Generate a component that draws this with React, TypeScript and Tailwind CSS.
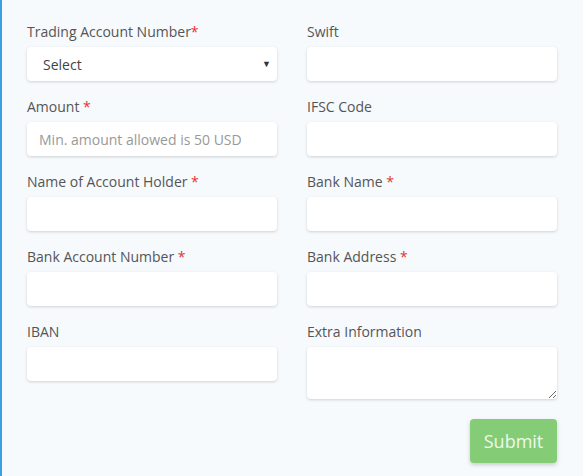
import React from "react";

const Label = ({ text, req, tight }: { text: string; req?: boolean; tight?: boolean }) => (
  <label className="block h-5 mb-[5px] text-[14px] leading-5 text-[#555555]">
    {text}
    {req && <span className="text-[#e3342f]">{tight ? "*" : " *"}</span>}
  </label>
);

const inputCls =
  "block w-full h-[34px] rounded-[4px] bg-white px-3 text-[14px] text-[#444] outline-none shadow-[0_1px_3px_rgba(0,0,0,0.16)] placeholder:text-[#999]";

export default function App() {
  return (
    <div
      className="w-[583px] h-[476px] bg-[#f6fafd] border-l-2 border-[#3d9fe3] pl-[25px] pr-[25px] pt-[22px]"
      style={{ fontFamily: '"Open Sans", "Noto Sans", sans-serif' }}
    >
      <div className="grid grid-cols-[250px_250px] gap-x-[30px]">
        <div className="flex flex-col">
          <div className="mb-[16px]">
            <Label text="Trading Account Number" req tight />
            <div className="relative">
              <select className={inputCls + " appearance-none pl-4"} defaultValue="">
                <option value="">Select</option>
              </select>
              <span className="pointer-events-none absolute right-[6px] top-[10px] text-[9px] text-[#333]">▼</span>
            </div>
          </div>
          <div className="mb-[16px]">
            <Label text="Amount" req />
            <input className={inputCls} placeholder="Min. amount allowed is 50 USD" />
          </div>
          <div className="mb-[16px]">
            <Label text="Name of Account Holder" req />
            <input className={inputCls} />
          </div>
          <div className="mb-[16px]">
            <Label text="Bank Account Number" req />
            <input className={inputCls} />
          </div>
          <div>
            <Label text="IBAN" />
            <input className={inputCls} />
          </div>
        </div>
        <div className="flex flex-col">
          <div className="mb-[16px]">
            <Label text="Swift" />
            <input className={inputCls} />
          </div>
          <div className="mb-[16px]">
            <Label text="IFSC Code" />
            <input className={inputCls} />
          </div>
          <div className="mb-[16px]">
            <Label text="Bank Name" req />
            <input className={inputCls} />
          </div>
          <div className="mb-[16px]">
            <Label text="Bank Address" req />
            <input className={inputCls} />
          </div>
          <div>
            <Label text="Extra Information" />
            <textarea className="block w-full h-[52px] rounded-[4px] bg-white px-3 py-1 text-[14px] text-[#444] outline-none shadow-[0_1px_3px_rgba(0,0,0,0.16)]" />
          </div>
          <div className="flex justify-end mt-[20px]">
            <button className="w-[87px] h-[44px] rounded-[4px] bg-[#84cc76] text-[18px] text-[#eef9eb] shadow-[0_2px_4px_rgba(0,0,0,0.18)]">
              Submit
            </button>
          </div>
        </div>
      </div>
    </div>
  );
}
